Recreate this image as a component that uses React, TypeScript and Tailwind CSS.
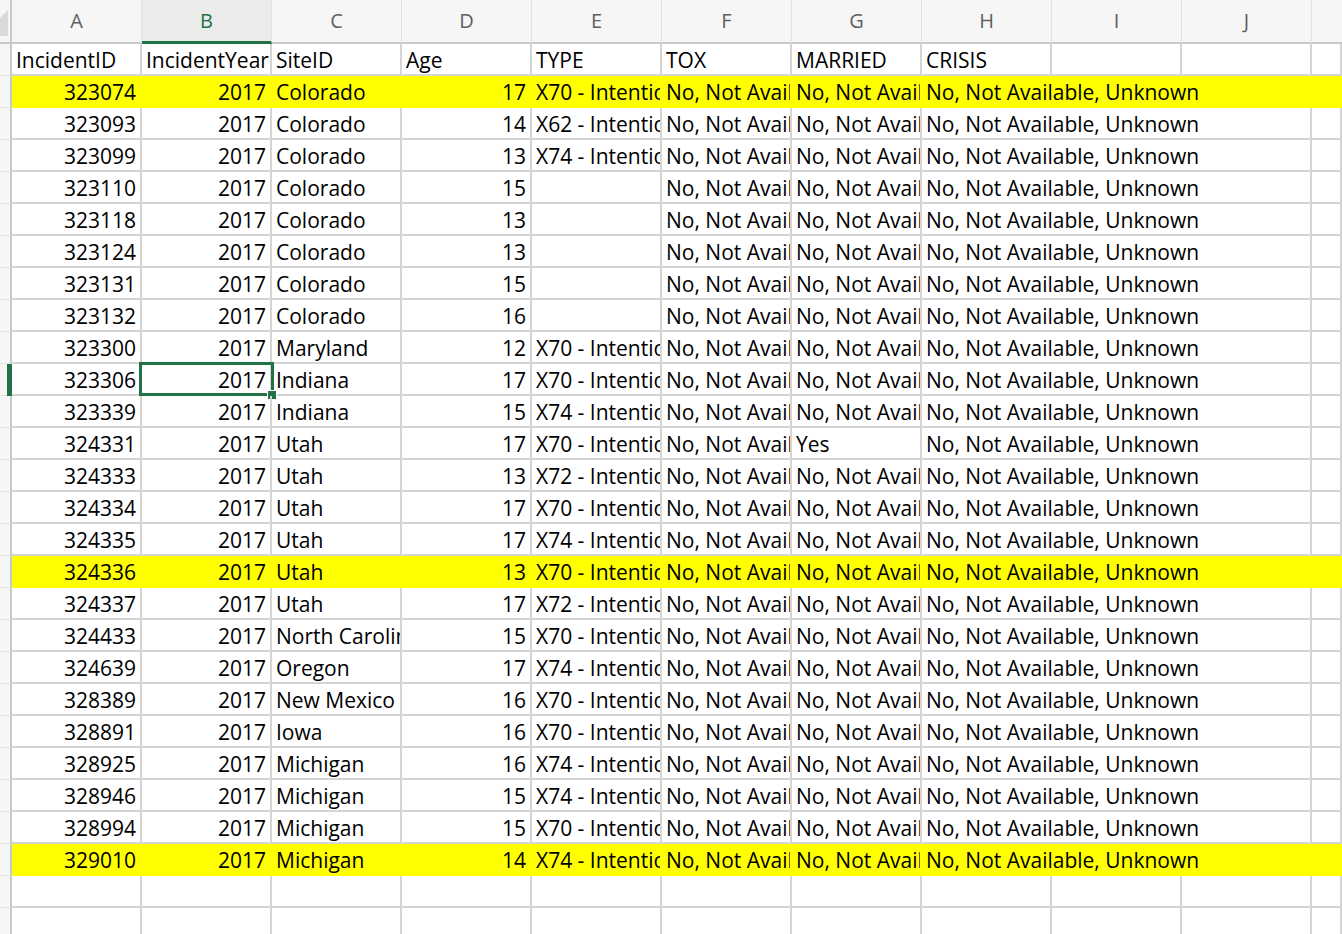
import clsx from 'clsx'

const LETTERS = ['A', 'B', 'C', 'D', 'E', 'F', 'G', 'H', 'I', 'J']
const HEADINGS = ['IncidentID', 'IncidentYear', 'SiteID', 'Age', 'TYPE', 'TOX', 'MARRIED', 'CRISIS', '', '']

const NA = 'No, Not Available, Unknown'

type Row = { id: string; site: string; age: string; type: string; married?: string; hl?: boolean }

const ROWS: Row[] = [
  { id: '323074', site: 'Colorado', age: '17', type: 'X70', hl: true },
  { id: '323093', site: 'Colorado', age: '14', type: 'X62' },
  { id: '323099', site: 'Colorado', age: '13', type: 'X74' },
  { id: '323110', site: 'Colorado', age: '15', type: '' },
  { id: '323118', site: 'Colorado', age: '13', type: '' },
  { id: '323124', site: 'Colorado', age: '13', type: '' },
  { id: '323131', site: 'Colorado', age: '15', type: '' },
  { id: '323132', site: 'Colorado', age: '16', type: '' },
  { id: '323300', site: 'Maryland', age: '12', type: 'X70' },
  { id: '323306', site: 'Indiana', age: '17', type: 'X70' },
  { id: '323339', site: 'Indiana', age: '15', type: 'X74' },
  { id: '324331', site: 'Utah', age: '17', type: 'X70', married: 'Yes' },
  { id: '324333', site: 'Utah', age: '13', type: 'X72' },
  { id: '324334', site: 'Utah', age: '17', type: 'X70' },
  { id: '324335', site: 'Utah', age: '17', type: 'X74' },
  { id: '324336', site: 'Utah', age: '13', type: 'X70', hl: true },
  { id: '324337', site: 'Utah', age: '17', type: 'X72' },
  { id: '324433', site: 'North Carolina', age: '15', type: 'X70' },
  { id: '324639', site: 'Oregon', age: '17', type: 'X74' },
  { id: '328389', site: 'New Mexico', age: '16', type: 'X70' },
  { id: '328891', site: 'Iowa', age: '16', type: 'X70' },
  { id: '328925', site: 'Michigan', age: '16', type: 'X74' },
  { id: '328946', site: 'Michigan', age: '15', type: 'X74' },
  { id: '328994', site: 'Michigan', age: '15', type: 'X70' },
  { id: '329010', site: 'Michigan', age: '14', type: 'X74', hl: true },
]

// row 10 (323306), column B is the active cell
const ACTIVE = 9

function Cell({ children, right, hl, wide, last, className }: {
  children?: React.ReactNode
  right?: boolean
  hl?: boolean
  wide?: boolean
  last?: boolean
  className?: string
}) {
  return (
    <div
      className={clsx(
        'h-[32px] overflow-hidden whitespace-nowrap border-r-2 border-b-2 px-[4px] leading-[32px]',
        last ? 'min-w-0 flex-1' : wide ? 'w-[390px] shrink-0' : 'w-[130px] shrink-0',
        hl ? 'border-[#ffff00]' : 'border-[#d5d5d5]',
        right && 'text-right',
        className
      )}
    >
      {children}
    </div>
  )
}

function RowHead({ active }: { active?: boolean }) {
  return (
    <div className="relative h-[32px] w-[12px] shrink-0 border-r-2 border-b border-r-[#c9c9c9] border-b-[#e2e2e2] bg-[#f6f6f6]">
      {active && <div className="absolute top-0 right-[-2px] h-[32px] w-[5px] bg-[#217346]" />}
    </div>
  )
}

export default function App() {
  return (
    <div className="h-[934px] w-full overflow-hidden bg-white font-['Open_Sans',sans-serif] text-[21px] text-black">
      {/* column letters */}
      <div className="flex h-[44px]">
        <div className="h-[44px] w-[12px] shrink-0 border-r-2 border-b-2 border-[#c9c9c9] bg-[#f6f6f6]">
          <svg width="10" height="42" className="block">
            <polygon points="8,10 8,36 -18,36" fill="#dadada" />
          </svg>
        </div>
        {LETTERS.map((l) => (
          <div
            key={l}
            className={clsx(
              'flex h-[44px] w-[130px] shrink-0 items-center justify-center border-r border-r-[#e2e2e2] text-[20px]',
              l === 'B'
                ? 'border-b-[3px] border-b-[#217346] bg-[#ebebeb] text-[#217346]'
                : 'border-b-2 border-b-[#c9c9c9] bg-[#f6f6f6] text-[#5f5f5f]'
            )}
          >
            {l}
          </div>
        ))}
        <div className="h-[44px] min-w-0 flex-1 border-b-2 border-[#c9c9c9] bg-[#f6f6f6]" />
      </div>

      {/* field names */}
      <div className="flex">
        <RowHead />
        {HEADINGS.map((h, i) => (
          <Cell key={i}>{h}</Cell>
        ))}
        <Cell last />
      </div>

      {ROWS.map((r, i) => (
        <div key={r.id} className={clsx('flex', r.hl && 'bg-[#ffff00]')}>
          <RowHead active={i === ACTIVE} />
          <Cell right hl={r.hl}>{r.id}</Cell>
          <Cell right hl={r.hl} className="relative overflow-visible">
            2017
            {i === ACTIVE && (
              <>
                <div className="absolute top-[-2px] left-[-3px] h-[34px] w-[135px] border-[3px] border-[#217346]" />
                <div className="absolute right-[-7px] bottom-[-6px] h-[10px] w-[10px] border border-white bg-[#217346]" />
              </>
            )}
          </Cell>
          <Cell hl={r.hl}>{r.site}</Cell>
          <Cell right hl={r.hl}>{r.age}</Cell>
          <Cell hl={r.hl}>{r.type && `${r.type} - Intentional self-harm`}</Cell>
          <Cell hl={r.hl}>{NA}</Cell>
          <Cell hl={r.hl}>{r.married ?? NA}</Cell>
          <Cell wide hl={r.hl}>{NA}</Cell>
          <Cell last hl={r.hl} />
        </div>
      ))}

      {[0, 1].map((k) => (
        <div key={k} className="flex">
          <RowHead />
          {LETTERS.map((l) => (
            <Cell key={l} />
          ))}
          <Cell last />
        </div>
      ))}
    </div>
  )
}
